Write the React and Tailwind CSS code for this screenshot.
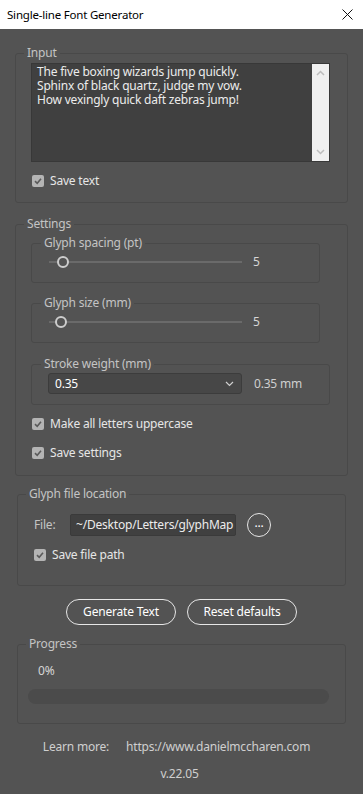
import React from "react";

function Check({ label, className = "" }) {
  return (
    <div className={"flex items-center h-[16px] " + className}>
      <div className="w-[12px] h-[12px] rounded-[2px] bg-[#b4b4b4] flex items-center justify-center">
        <svg width="10" height="10" viewBox="0 0 10 10">
          <path d="M2 5.2 L4.2 7.3 L8 2.8" fill="none" stroke="#5a5a5a" strokeWidth="1.6" />
        </svg>
      </div>
      <span className="ml-[6px] text-[#e6e6e6]">{label}</span>
    </div>
  );
}

function Slider({ pos, value }) {
  return (
    <div className="flex items-center h-[14px] mt-[4px]">
      <div className="relative ml-[17px] w-[193px] h-[14px]">
        <div className="absolute left-0 right-0 top-[6px] h-[2px] bg-[#6a6a6a]" />
        <div
          className="absolute top-[1px] w-[12px] h-[12px] rounded-full border-2 border-[#cdcdcd] bg-[#535353]"
          style={{ left: pos - 6 }}
        />
      </div>
      <span className="ml-[11px] text-[#d6d6d6]">{value}</span>
    </div>
  );
}

export default function App() {
  return (
    <div className="w-[363px] h-[794px] bg-[#535353] text-[12px] leading-[16px] tracking-[-0.2px] font-['Noto_Sans',sans-serif] overflow-hidden">
      <div className="h-[29px] bg-white flex items-center justify-between pl-[7px] pr-[10px] text-black">
        <span className="text-[11.5px] tracking-[-0.2px]">Single-line Font Generator</span>
        <svg width="11" height="11" viewBox="0 0 11 11">
          <path d="M0.5 0.5 L10.5 10.5 M10.5 0.5 L0.5 10.5" stroke="#111" strokeWidth="1" />
        </svg>
      </div>

      <div className="px-[15px]">
        {/* Input */}
        <fieldset className="mt-[16px] border border-[#494949] rounded-[3px] pl-[15px] pr-[17px] pb-[13px]">
          <legend className="ml-[-7px] px-[3px] text-[#c4c4c4]">Input</legend>
          <div className="mt-[2px] h-[99px] bg-[#404040] border border-[#383838] flex">
            <div className="flex-1 pl-[5px] pt-[1px] leading-[14px] text-[#ececec]">
              <div>The five boxing wizards jump quickly.</div>
              <div>Sphinx of black quartz, judge my vow.</div>
              <div>How vexingly quick daft zebras jump!</div>
            </div>
            <div className="w-[17px] bg-[#f0f0f0] flex flex-col justify-between items-center py-[6px]">
              <svg width="9" height="6" viewBox="0 0 9 6">
                <path d="M1 5 L4.5 1.5 L8 5" fill="none" stroke="#bdbdbd" strokeWidth="1.5" />
              </svg>
              <svg width="9" height="6" viewBox="0 0 9 6">
                <path d="M1 1 L4.5 4.5 L8 1" fill="none" stroke="#bdbdbd" strokeWidth="1.5" />
              </svg>
            </div>
          </div>
          <Check label="Save text" className="mt-[11px] ml-[1px]" />
        </fieldset>

        {/* Settings */}
        <fieldset className="mt-[13px] border border-[#494949] rounded-[3px] pl-[15px] pr-[17px] pb-[14px]">
          <legend className="ml-[-7px] px-[3px] text-[#c4c4c4]">Settings</legend>

          <fieldset className="mt-[3px] w-[289px] border border-[#494949] rounded-[3px] pb-[13px]">
            <legend className="ml-[9px] px-[3px] text-[#c4c4c4]">Glyph spacing (pt)</legend>
            <Slider pos={14} value="5" />
          </fieldset>

          <fieldset className="mt-[12px] w-[289px] border border-[#494949] rounded-[3px] pb-[13px]">
            <legend className="ml-[9px] px-[3px] text-[#c4c4c4]">Glyph size (mm)</legend>
            <Slider pos={12} value="5" />
          </fieldset>

          <fieldset className="mt-[13px] border border-[#494949] rounded-[3px] pb-[10px]">
            <legend className="ml-[9px] px-[3px] text-[#c4c4c4]">Stroke weight (mm)</legend>
            <div className="flex items-center mt-[1px]">
              <div className="ml-[16px] w-[194px] h-[21px] bg-[#474747] border border-[#3c3c3c] rounded-[3px] flex items-center justify-between pl-[6px] pr-[7px] text-white">
                <span>0.35</span>
                <svg width="9" height="6" viewBox="0 0 9 6">
                  <path d="M1 1 L4.5 4.5 L8 1" fill="none" stroke="#d0d0d0" strokeWidth="1.2" />
                </svg>
              </div>
              <span className="ml-[12px] text-[#cfcfcf]">0.35 mm</span>
            </div>
          </fieldset>

          <Check label="Make all letters uppercase" className="mt-[11px] ml-[1px]" />
          <Check label="Save settings" className="mt-[13px] ml-[1px]" />
        </fieldset>

        {/* Glyph file location */}
        <fieldset className="mt-[10px] mx-[2px] border border-[#494949] rounded-[3px] pl-[16px] pr-[16px] pb-[22px]">
          <legend className="ml-[-8px] px-[3px] text-[#c4c4c4]">Glyph file location</legend>
          <div className="flex items-center mt-[11px] h-[24px]">
            <span className="w-[36px] text-[#c4c4c4]">File:</span>
            <div className="w-[166px] h-[22px] bg-[#404040] border border-[#3a3a3a] rounded-[2px] pl-[5px] flex items-center overflow-hidden whitespace-nowrap text-[#ececec]">
              ~/Desktop/Letters/glyphMap
            </div>
            <div className="ml-[11px] w-[24px] h-[24px] rounded-full border border-[#e6e6e6] flex items-center justify-center text-white leading-none pb-[4px]">
              ...
            </div>
          </div>
          <Check label="Save file path" className="mt-[10px]" />
        </fieldset>

        {/* Buttons */}
        <div className="flex justify-center gap-[11px] mt-[13px]">
          <div className="w-[110px] h-[26px] rounded-full border border-[#e6e6e6] flex items-center justify-center text-white">
            Generate Text
          </div>
          <div className="w-[110px] h-[26px] rounded-full border border-[#e6e6e6] flex items-center justify-center text-white">
            Reset defaults
          </div>
        </div>

        {/* Progress */}
        <fieldset className="mt-[11px] mx-[2px] border border-[#494949] rounded-[3px] pl-[10px] pr-[16px] pb-[19px]">
          <legend className="ml-[-2px] px-[3px] text-[#c4c4c4]">Progress</legend>
          <div className="mt-[11px] ml-[10px] text-[#d6d6d6]">0%</div>
          <div className="mt-[10px] h-[15px] rounded-full bg-[#4b4b4b]" />
        </fieldset>

        <div className="mt-[15px] flex justify-center gap-[17px] text-[#cfcfcf] pr-[10px]">
          <span>Learn more:</span>
          <span>https://www.danielmccharen.com</span>
        </div>
        <div className="mt-[11px] text-center text-[#cfcfcf] pr-[4px]">v.22.05</div>
      </div>
    </div>
  );
}
